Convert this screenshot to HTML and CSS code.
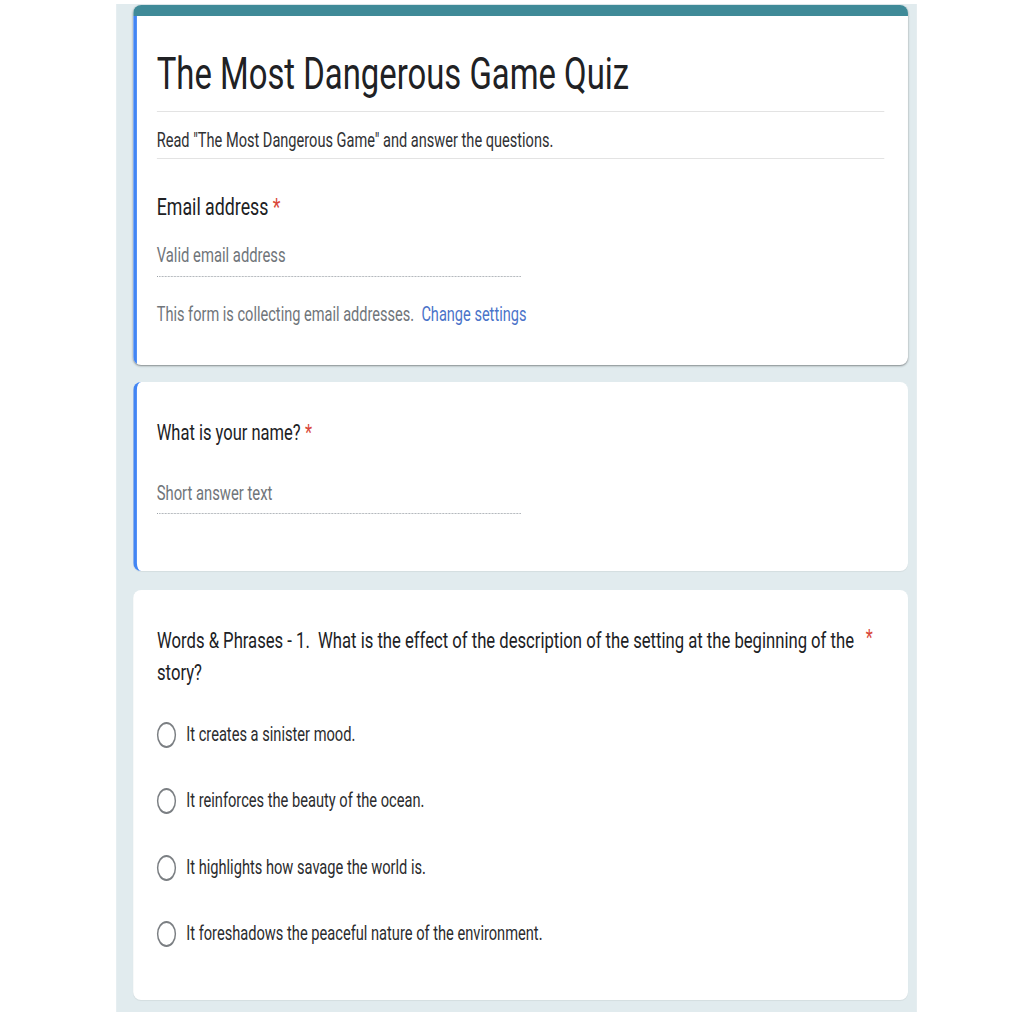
FILE: index.html
```html
<!DOCTYPE html>
<html lang="en">
<head>
<meta charset="utf-8">
<title>The Most Dangerous Game Quiz</title>
<link rel="stylesheet" href="styles.css">
</head>
<body>
<div class="stage">
  <div class="panel">
    <section class="card card-header">
      <div class="accent"></div>
      <div class="card-body marked">
        <h1 class="title">The Most Dangerous Game Quiz</h1>
        <p class="desc">Read "The Most Dangerous Game" and answer the questions.</p>
        <div class="label email-label">Email address<span class="req">*</span></div>
        <div class="field">Valid email address</div>
        <p class="note">This form is collecting email addresses.&nbsp; <a class="link" href="#">Change settings</a></p>
      </div>
    </section>

    <section class="card card-name marked">
      <div class="label">What is your name?<span class="req">*</span></div>
      <div class="field field-name">Short answer text</div>
    </section>

    <section class="card card-q">
      <div class="q-row">
        <div class="q-text">Words &amp; Phrases - 1.&nbsp; What is the effect of the description of the setting at the beginning of the<br>story?</div>
        <span class="req q-req">*</span>
      </div>
      <ul class="options">
        <li class="option"><span class="radio"></span><span class="opt-text">It creates a sinister mood.</span></li>
        <li class="option"><span class="radio"></span><span class="opt-text">It reinforces the beauty of the ocean.</span></li>
        <li class="option"><span class="radio"></span><span class="opt-text">It highlights how savage the world is.</span></li>
        <li class="option"><span class="radio"></span><span class="opt-text">It foreshadows the peaceful nature of the environment.</span></li>
      </ul>
    </section>
  </div>
</div>
</body>
</html>
```
FILE: styles.css
```css
html, body {
  margin: 0;
  padding: 0;
  background: #ffffff;
  overflow: hidden;
}

body {
  font-family: Roboto, "Liberation Sans", Arial, sans-serif;
  color: #202124;
}

/* The sheet is laid out in a wider space and compressed horizontally */
.stage {
  width: 1024px;
  padding-top: 4px;
  transform: scaleX(0.74);
  transform-origin: 0 0;
}

.panel {
  margin-left: 156.8px;
  width: 1082.4px;
  box-sizing: border-box;
  background: #e1ebee;
  padding: 1px 12.2px 12px 23px;
}

.card {
  background: #ffffff;
  border-radius: 10.8px / 8px;
  overflow: hidden;
  box-shadow: 0 1px 1px rgba(0, 0, 0, 0.06);
}

.card + .card {
  margin-top: 17px;
}

.card-header {
  box-shadow: 0 1px 2px rgba(60, 64, 67, 0.45), 0 1px 3px rgba(60, 64, 67, 0.15);
}

.accent {
  height: 11px;
  background: #3f8a98;
}

.marked {
  border-left: 5.4px solid #4285f4;
}

.card-body {
  padding: 32px 32.4px 38px 27px;
}

.title {
  margin: 0;
  font-family: Roboto, "Liberation Sans", sans-serif;
  font-weight: 400;
  font-size: 44.4px;
  line-height: 52px;
  color: #202124;
  padding-bottom: 11px;
  border-bottom: 1px solid #e3e3e3;
}

.desc {
  margin: 0;
  padding: 17px 0 5px;
  font-size: 19.7px;
  line-height: 24px;
  color: #303134;
  border-bottom: 1px solid #e3e3e3;
}

.label {
  font-size: 22.3px;
  line-height: 26px;
  color: #202124;
}

.email-label {
  margin-top: 33.8px;
  font-size: 24px;
  line-height: 28px;
}

.req {
  color: #d9473a;
  padding-left: 6px;
}

.field {
  margin-top: 22.2px;
  width: 491.8px;
  font-size: 20px;
  line-height: 24px;
  color: #70757a;
  padding-bottom: 9px;
  border-bottom: 1px dotted #9aa0a6;
}

.note {
  margin: 26px 0 0;
  font-size: 19.7px;
  line-height: 24px;
  color: #70757a;
}

.link {
  color: #4a73c9;
  text-decoration: none;
}

.card-name {
  padding: 37.4px 32.4px 57px 27px;
}

.card-name + .card-q {
  margin-top: 19px;
}

.field-name {
  margin-top: 35.6px;
  padding-bottom: 8px;
}

.card-q {
  padding: 34.3px 32.4px 54px 32.4px;
}

.q-row {
  display: flex;
  align-items: flex-start;
}

.q-text {
  font-size: 22.5px;
  line-height: 32px;
  color: #202124;
}

.q-req {
  padding-left: 16px;
  font-size: 22px;
  line-height: 28px;
}

.options {
  list-style: none;
  margin: 34.7px 0 0;
  padding: 0;
  display: flex;
  flex-direction: column;
  gap: 42.3px;
}

.option {
  display: flex;
  align-items: center;
  height: 24px;
}

.radio {
  flex: none;
  width: 26px;
  height: 26px;
  box-sizing: border-box;
  border-style: solid;
  border-color: #7b7f83;
  border-width: 2px 2.7px;
  border-radius: 50%;
  margin-right: 13.5px;
}

.opt-text {
  font-size: 19.8px;
  line-height: 24px;
  color: #2b2c2e;
}
```
